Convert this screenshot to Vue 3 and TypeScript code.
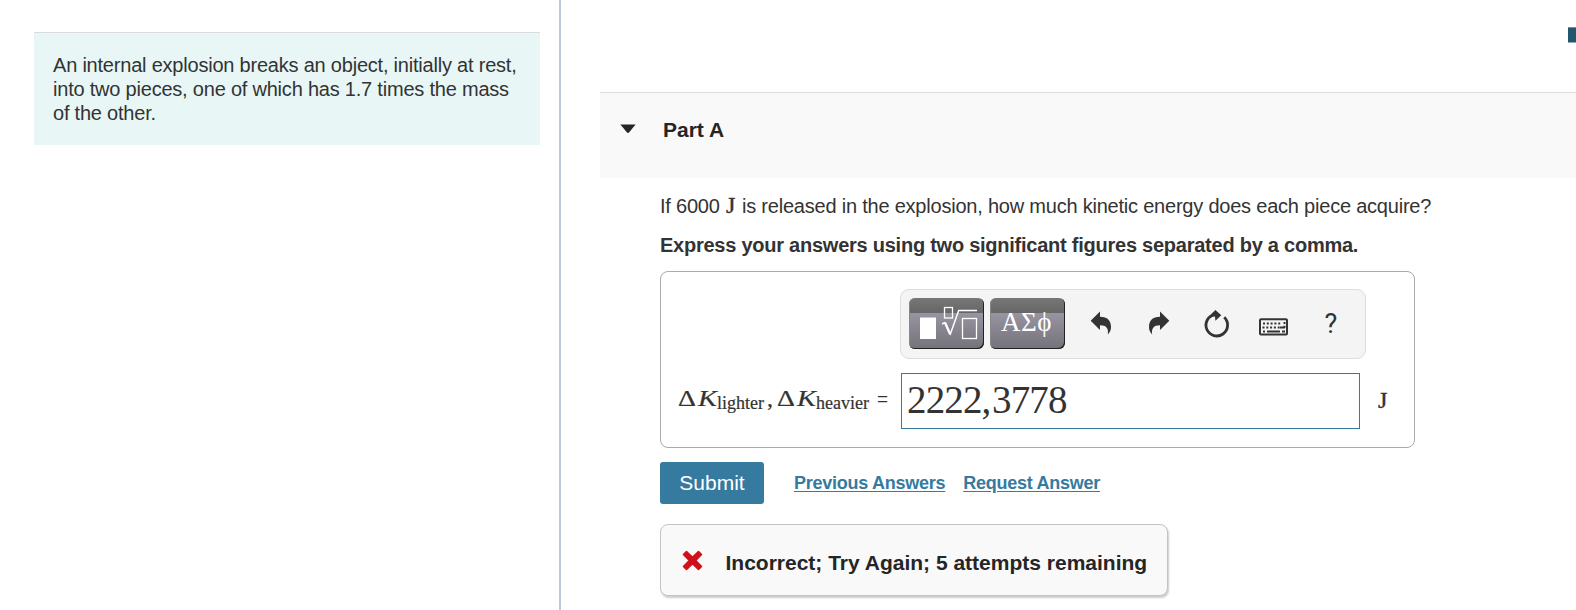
<script setup lang="ts">
const intro: string[] = [
  'An internal explosion breaks an object, initially at rest,',
  'into two pieces, one of which has 1.7 times the mass',
  'of the other.',
]
const answer: string[] = ['2222,', '3778']
const links: string[] = ['Previous Answers', 'Request Answer']
</script>

<template>
  <div class="page">
    <aside class="side">
      <div class="intro">
        <div v-for="line in intro" :key="line"><span>{{ line }}</span></div>
      </div>
    </aside>
    <main class="main">
      <div class="top"><div class="tab"></div></div>
      <header class="part">
        <svg class="caret" width="16" height="10" viewBox="0 0 16 10"><path d="M0.4 0.5H15.6L9.2 8.3Q8 9.7 6.8 8.3Z" fill="#252525" /></svg>
        <h2>Part A</h2>
      </header>
      <section class="body">
        <p class="question"><span>If 6000 <span class="unit">J</span> is released in the explosion, how much kinetic energy does each piece acquire?</span></p>
        <p class="instruct"><span>Express your answers using two significant figures separated by a comma.</span></p>
        <div class="card">
          <div class="toolbar">
            <button class="dark" aria-label="Templates">
              <svg width="75" height="51" viewBox="0 0 75 51" fill="none" stroke="#fff">
                <rect x="11" y="19.5" width="16" height="21.5" fill="#fff" stroke="none" />
                <rect x="35.5" y="9.5" width="8" height="10.5" stroke-width="1.3" />
                <path d="M33 26L36 24.5" stroke-width="1.4" />
                <path d="M36 24.5L41 36" stroke-width="2.3" />
                <path d="M41 37L49.7 12.5H68" stroke-width="1.5" />
                <rect x="53.5" y="20.5" width="14" height="20" stroke-width="1.3" />
              </svg>
            </button>
            <button class="dark greek">ΑΣϕ</button>
            <svg class="icons" width="215" height="50" viewBox="0 0 215 50" fill="#333">
              <path d="M0.7 22.7L10 13.5V18.7C17.5 18.7 21 22.8 21 29C21 32 20 34.3 17.8 36.5C18.8 30.5 16.5 27.2 10 27.2V32.1Z" />
              <path d="M79.3 22.7L70 13.5V18.7C62.5 18.7 59 22.8 59 29C59 32 60 34.3 62.2 36.5C61.2 30.5 63.5 27.2 70 27.2V32.1Z" />
              <path d="M124.5 16.6A10.8 10.8 0 1 0 134.2 19.3" fill="none" stroke="#333" stroke-width="2.8" />
              <path d="M125.4 12L131.3 17.2L125.4 22.8L125 18.4L121.5 18.2V15.8Z" />
              <rect x="170" y="21.3" width="27" height="15.2" rx="1" fill="none" stroke="#333" stroke-width="2" />
              <path d="M173 25.5H192M172.5 29.5H190M194.5 24V30" fill="none" stroke="#333" stroke-width="2" stroke-dasharray="2 1.8" />
              <path d="M173 33.5H175M177 33.5H190M192 33.5H195M190 29.5H195" fill="none" stroke="#333" stroke-width="2" />
            </svg>
            <span class="help">?</span>
          </div>
          <div class="row">
            <div class="math">
              <span class="delta">Δ</span><i>K</i><span class="sub s1">lighter</span><span class="comma">,</span><span class="delta">Δ</span><i>K</i><span class="sub s2">heavier</span>
            </div>
            <span class="eq">=</span>
            <div class="field"><span v-for="part in answer" :key="part">{{ part }}</span></div>
            <span class="junit">J</span>
          </div>
        </div>
        <div class="actions">
          <button class="submit">Submit</button>
          <a v-for="link in links" :key="link">{{ link }}</a>
        </div>
        <div class="feedback">
          <svg width="21" height="21" viewBox="0 0 21 21"><path d="M4.5 1.5L10.5 7.3L16.5 1.5L19.5 4.5L13.7 10.5L19.5 16.5L16.5 19.5L10.5 13.7L4.5 19.5L1.5 16.5L7.3 10.5L1.5 4.5Z" fill="#d0101c" stroke="#d0101c" stroke-width="1.6" stroke-linejoin="round" /></svg>
          <span>Incorrect; Try Again; 5 attempts remaining</span>
        </div>
      </section>
    </main>
  </div>
</template>

<style scoped>
* { box-sizing: border-box; }
.page { display: flex; width: 1576px; height: 610px; overflow: hidden; background: #fff; color: #333; font-family: "Liberation Sans", Arial, sans-serif; font-size: 20px; white-space: nowrap; }
.side { width: 561px; padding: 32px 0 0 34px; border-right: 2px solid #bcc9d8; flex: none; }
.intro { width: 506px; height: 113px; border-top: 1px solid #d9dcdc; background: #e8f7f6; padding: 20px 19px; line-height: 24px; letter-spacing: -.212px; }
.main { flex: 1; padding-left: 39px; min-width: 0; }
.top { height: 92px; padding-top: 27px; display: flex; justify-content: flex-end; }
.tab { width: 8px; height: 16px; background: #23576f; border-top: 1px solid #6d92a3; border-bottom: 1px solid #8ba8b5; }
.part { height: 86px; background: #f9f9f9; border-top: 1px solid #dcdcdc; display: flex; padding: 24px 0 0 20px; }
.caret { margin-top: 7px; }
h2 { margin: 0 0 0 27px; font-size: 21px; line-height: 26px; color: #252525; }
.body { padding-left: 60px; }
p { margin: 0; line-height: 24px; height: 24px; }
.question { margin-top: 16px; letter-spacing: -.215px; }
.unit { font-family: "Liberation Serif", serif; font-size: 24px; line-height: 20px; -webkit-text-stroke: .4px #333; margin: 0 1.5px 0 1px; }
.instruct { margin-top: 15px; font-weight: bold; letter-spacing: -.245px; }
.card { width: 755px; height: 177px; margin-top: 14px; border: 1px solid #aaa; border-radius: 8px; padding: 17px 0 0 17px; }
.toolbar { width: 466px; height: 70px; margin-left: 222px; border: 1px solid #ddd; border-radius: 9px; background: #f4f4f4; display: flex; padding: 8px 0 8px 8px; }
button { border: 0; padding: 0; font-family: inherit; }
.dark { width: 75px; height: 51px; flex: none; border-radius: 6px; margin-right: 6px; background: linear-gradient(#777 0, #666 15px, #9894a2 15px, #747279 100%); box-shadow: inset -1px -1px 0 #222, inset 1px 0 0 #888; }
.greek { color: #fff; font: 27px/49px "Liberation Serif", serif; letter-spacing: .6px; padding: 0 2px 2px 0; }
.icons { flex: none; margin-left: 19px; }
.help { width: 24px; margin-left: 14px; text-align: center; font: 27px/52px Roboto, sans-serif; }
.row { display: flex; margin-top: 14px; align-items: flex-start; }
.math { width: 190px; flex: none; font-family: "Liberation Serif", serif; font-size: 24px; line-height: 50px; color: #333; display: flex; -webkit-text-stroke: .2px #333; }
.math i { display: inline-block; width: 19px; transform: scaleX(1.18); transform-origin: left; }
.delta { width: 20px; display: inline-block; transform: scaleX(1.16); transform-origin: left; }
.sub { font-size: 18px; line-height: 60px; }
.s1 { width: 48px; }
.s2 { width: 52px; }
.comma { width: 12px; padding-left: 2px; }
.eq { width: 33px; padding-left: 9px; font-size: 19px; line-height: 51px; flex: none; }
.field { width: 459px; height: 56px; border: 1px solid #367a9f; padding-left: 5px; font: 39px/51px "Liberation Serif", serif; letter-spacing: -.85px; display: flex; gap: 1.5px; flex: none; }
.junit { margin-left: 18px; font: 24px/54px "Liberation Serif", serif; -webkit-text-stroke: .4px #333; }
.actions { display: flex; margin-top: 14px; height: 42px; align-items: center; }
.submit { width: 104px; height: 42px; margin-right: 30px; background: #367a9f; color: #fff; border-radius: 3px; font-size: 21px; }
a { font-size: 18px; font-weight: bold; color: #367a9f; text-decoration: underline; margin-right: 18px; text-underline-offset: 2px; letter-spacing: -.26px; }
.feedback { margin-top: 20px; width: 508px; height: 72px; border: 1px solid #c4c4c4; border-radius: 8px; background: #f9f9f9; box-shadow: 1px 2px 2px #ccc; display: flex; align-items: flex-start; padding: 25px 0 0 21px; font-size: 21px; font-weight: bold; color: #252525; line-height: 26px; }
.feedback span { margin-left: 22.5px; }
</style>
